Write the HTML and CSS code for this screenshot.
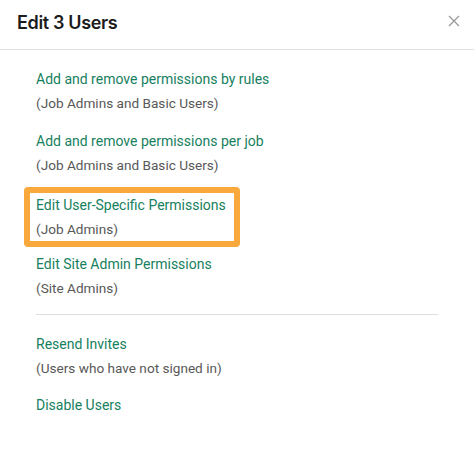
FILE: index.html
```html
<!DOCTYPE html>
<html lang="en">
<head>
<meta charset="utf-8">
<title>Edit 3 Users</title>
<link rel="stylesheet" href="styles.css">
</head>
<body>
<div class="modal">
  <header class="modal-header">
    <h1 class="modal-title">Edit 3 Users</h1>
    <button class="close-btn" aria-label="Close">
      <svg width="12" height="12" viewBox="0 0 12 12"><path d="M1 1L11 11M11 1L1 11" stroke="#9a9a9a" stroke-width="1.3" fill="none"/></svg>
    </button>
  </header>
  <div class="modal-body">
    <div class="option">
      <a class="option-link" href="#">Add and remove permissions by rules</a>
      <div class="option-note">(Job Admins and Basic Users)</div>
    </div>
    <div class="option">
      <a class="option-link" href="#">Add and remove permissions per job</a>
      <div class="option-note">(Job Admins and Basic Users)</div>
    </div>
    <div class="option option-highlight">
      <a class="option-link" href="#">Edit User-Specific Permissions</a>
      <div class="option-note">(Job Admins)</div>
    </div>
    <div class="option">
      <a class="option-link" href="#">Edit Site Admin Permissions</a>
      <div class="option-note">(Site Admins)</div>
    </div>
    <hr class="divider">
    <div class="option option-tight">
      <a class="option-link" href="#">Resend Invites</a>
      <div class="option-note">(Users who have not signed in)</div>
    </div>
    <div class="option">
      <a class="option-link" href="#">Disable Users</a>
    </div>
  </div>
</div>
</body>
</html>
```

FILE: styles.css
```css
* { box-sizing: border-box; }
html, body { margin: 0; padding: 0; background: #fff; }
body {
  font-family: Roboto, "Noto Sans", sans-serif;
  color: #222;
}
.modal { width: 474px; height: 462px; background: #fff; }
.modal-header {
  height: 50px;
  border-bottom: 1px solid #e3e3e3;
  display: flex;
  align-items: center;
  justify-content: space-between;
  padding: 0 14px 4px 17px;
}
.modal-title {
  margin: 0;
  font-family: Inter, "Noto Sans", sans-serif;
  font-size: 18px;
  font-weight: 600;
  color: #1c1c1c;
  letter-spacing: -0.35px;
}
.close-btn {
  border: 0;
  background: none;
  padding: 0;
  width: 12px;
  height: 12px;
  display: flex;
  margin-top: -4px;
}
.modal-body {
  padding: 17px 36px 0 36px;
}
.option {
  display: flex;
  flex-direction: column;
  align-items: flex-start;
  margin-bottom: 14px;
}
.option-tight { margin-bottom: 13px; }
.option-link {
  color: #17805e;
  text-decoration: none;
  font-size: 14px;
  line-height: 24px;
}
.option-note {
  color: #585858;
  font-size: 13.6px;
  line-height: 24px;
}
.option-highlight {
  width: fit-content;
  border: 6px solid #f9a93b;
  border-radius: 4px;
  padding: 0 8px 0 6px;
  margin: -4px 0 5px -12px;
}
.divider {
  border: 0;
  border-top: 1px solid #dedede;
  margin: 2px 0 17px 0;
}
```
